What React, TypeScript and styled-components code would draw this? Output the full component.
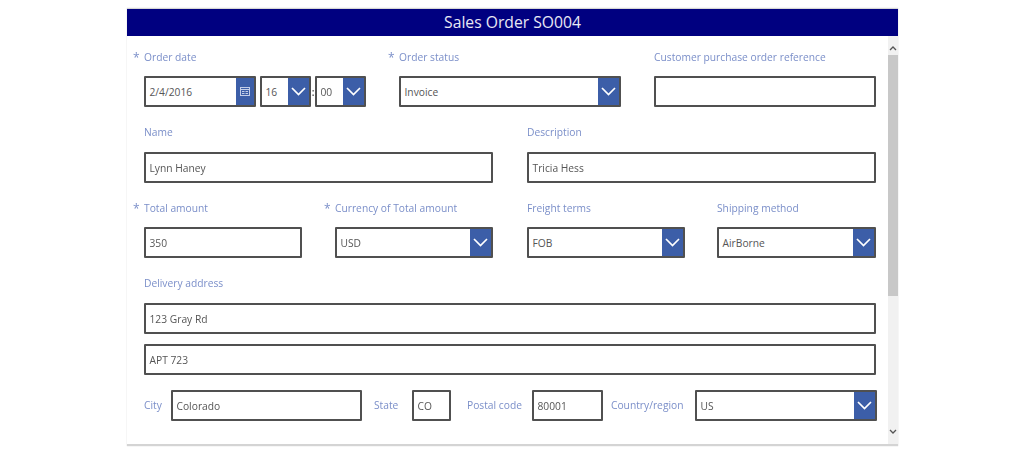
import styled, { createGlobalStyle } from "styled-components";

const GlobalStyle = createGlobalStyle`
  html, body {
    margin: 0;
    background: #fff;
    font-family: "Open Sans", "Liberation Sans", sans-serif;
  }
`;

const Chevron = () => (
  <svg width="15" height="9" viewBox="0 0 15 9" fill="none">
    <path d="M1 1 L7.5 7.5 L14 1" stroke="#fff" strokeWidth="1.7" />
  </svg>
);

const CalendarIcon = () => (
  <svg width="10" height="9" viewBox="0 0 10 9" fill="none" stroke="#c3cde8" strokeWidth="1">
    <rect x="0.5" y="0.5" width="9" height="8" />
    <path d="M0.5 2.5 H9.5 M2 4.5 H4.5 M5.5 4.5 H8 M2 6.5 H4.5 M5.5 6.5 H8" />
  </svg>
);

const ScrollArrow = ({ up }: { up?: boolean }) => (
  <svg width="8" height="5" viewBox="0 0 8 5" fill="none">
    <path d={up ? "M1 4 L4 1 L7 4" : "M1 1 L4 4 L7 1"} stroke="#555" strokeWidth="1.3" />
  </svg>
);

const Select = ({ value, width }: { value: string; width: number }) => (
  <Box $width={width}>
    <Value>{value}</Value>
    <DropButton $width={21}>
      <Chevron />
    </DropButton>
  </Box>
);

const Input = ({ value, width }: { value: string; width: number }) => (
  <Box $width={width}>
    <Value>{value}</Value>
  </Box>
);

export default function App() {
  return (
    <>
      <GlobalStyle />
      <Page>
        <Card>
          <Header>Sales Order SO004</Header>
          <Body>
            <Form>
              <Row>
                <Field $width={222}>
                  <Label $required>Order date</Label>
                  <DateTime>
                    <DateBox $width={112}>
                      <Value>2/4/2016</Value>
                      <DropButton $width={18}>
                        <CalendarIcon />
                      </DropButton>
                    </DateBox>
                    <Select value="16" width={51} />
                    <Colon>:</Colon>
                    <Select value="00" width={51} />
                  </DateTime>
                </Field>
                <Field $width={222} $left={33}>
                  <Label $required>Order status</Label>
                  <Select value="Invoice" width={222} />
                </Field>
                <Field $width={222} $left={33}>
                  <Label>Customer purchase order reference</Label>
                  <Input value="" width={222} />
                </Field>
              </Row>
              <Row>
                <Field $width={349}>
                  <Label>Name</Label>
                  <Input value="Lynn Haney" width={349} />
                </Field>
                <Field $width={349} $left={34}>
                  <Label>Description</Label>
                  <Input value="Tricia Hess" width={349} />
                </Field>
              </Row>
              <Row>
                <Field $width={158}>
                  <Label $required>Total amount</Label>
                  <Input value="350" width={158} />
                </Field>
                <Field $width={158} $left={33}>
                  <Label $required>Currency of Total amount</Label>
                  <Select value="USD" width={158} />
                </Field>
                <Field $width={158} $left={34}>
                  <Label>Freight terms</Label>
                  <Select value="FOB" width={158} />
                </Field>
                <Field $width={159} $left={32}>
                  <Label>Shipping method</Label>
                  <Select value="AirBorne" width={159} />
                </Field>
              </Row>
              <Address>
                <Label>Delivery address</Label>
                <Input value="123 Gray Rd" width={732} />
                <Input value="APT 723" width={732} />
              </Address>
              <InlineRow>
                <InlineLabel $width={27}>City</InlineLabel>
                <Input value="Colorado" width={191} />
                <InlineLabel $width={38} $left={12}>State</InlineLabel>
                <Input value="CO" width={39} />
                <InlineLabel $width={65} $left={16}>Postal code</InlineLabel>
                <Input value="80001" width={71} />
                <InlineLabel $width={84} $left={8}>Country/region</InlineLabel>
                <Select value="US" width={182} />
              </InlineRow>
            </Form>
            <ScrollBar>
              <ScrollTop>
                <ScrollArrow up />
              </ScrollTop>
              <ScrollThumb />
              <ScrollBottom>
                <ScrollArrow />
              </ScrollBottom>
            </ScrollBar>
          </Body>
        </Card>
      </Page>
    </>
  );
}

const Page = styled.div`
  width: 1024px;
  height: 454px;
  padding: 8px 0 0 127px;
  box-sizing: border-box;
  overflow: hidden;
`;

const Card = styled.div`
  width: 771px;
  border-top: 1px solid #d6d6d6;
  border-bottom: 2px solid #d4d4d4;
  box-shadow: 0 0 1px #c8c8c8;
  background: #fff;
  filter: blur(0.35px);
`;

const Header = styled.div`
  height: 27px;
  background: #000080;
  color: #e8e8f4;
  font-size: 15.7px;
  line-height: 27px;
  text-align: center;
`;

const Body = styled.div`
  display: flex;
  height: 408px;
`;

const Form = styled.div`
  flex: 1;
  padding: 10.5px 12px 0 17px;
  display: flex;
  flex-direction: column;
  gap: 15px;
  overflow: hidden;
`;

const Row = styled.div`
  display: flex;
`;

const Field = styled.div<{ $width: number; $left?: number }>`
  width: ${(p) => p.$width}px;
  margin-left: ${(p) => p.$left ?? 0}px;
  display: flex;
  flex-direction: column;
  gap: 9.5px;
`;

const Label = styled.div<{ $required?: boolean }>`
  position: relative;
  height: 20px;
  line-height: 20px;
  font-size: 10.25px;
  color: #7b8fc9;
  white-space: nowrap;

  &::before {
    content: "${(p) => (p.$required ? "*" : "")}";
    position: absolute;
    left: -11px;
    top: 1px;
    font-size: 12px;
  }
`;

const DateTime = styled.div`
  display: flex;
  align-items: center;
`;

const Colon = styled.span`
  width: 4px;
  flex-shrink: 0;
  text-align: center;
  font-size: 10px;
  font-weight: 600;
  color: #444;
`;

const Box = styled.div<{ $width: number }>`
  width: ${(p) => p.$width}px;
  height: 31px;
  box-sizing: border-box;
  display: flex;
  flex-shrink: 0;
  align-items: stretch;
  border: 2px solid #505050;
  border-radius: 1px;
  background: #fff;
`;

const DateBox = styled(Box)`
  margin-right: 4px;
`;

const Value = styled.div`
  flex: 1;
  min-width: 0;
  padding-left: 3.5px;
  font-size: 10.25px;
  line-height: 28px;
  color: #555;
  white-space: nowrap;
`;

const DropButton = styled.div<{ $width: number }>`
  width: ${(p) => p.$width}px;
  display: flex;
  align-items: center;
  justify-content: center;
  flex-shrink: 0;
  background: #3c5ea8;
`;

const Address = styled.div`
  display: flex;
  flex-direction: column;
  gap: 9.5px;

  & > div:nth-child(3) {
    margin-top: 0.5px;
  }
`;

const InlineRow = styled.div`
  display: flex;
  align-items: center;
`;

const InlineLabel = styled.div<{ $width: number; $left?: number }>`
  width: ${(p) => p.$width}px;
  margin-left: ${(p) => p.$left ?? 0}px;
  flex-shrink: 0;
  font-size: 10.25px;
  color: #7b8fc9;
  white-space: nowrap;
`;

const ScrollBar = styled.div`
  width: 10px;
  display: flex;
  flex-direction: column;
  background: #f1f1f1;
`;

const ScrollTop = styled.div`
  height: 19px;
  padding-bottom: 4px;
  box-sizing: border-box;
  display: flex;
  align-items: flex-end;
  justify-content: center;
`;

const ScrollThumb = styled.div`
  height: 241px;
  background: #c8c8c8;
`;

const ScrollBottom = styled.div`
  flex: 1;
  padding-bottom: 10px;
  display: flex;
  align-items: flex-end;
  justify-content: center;
`;
